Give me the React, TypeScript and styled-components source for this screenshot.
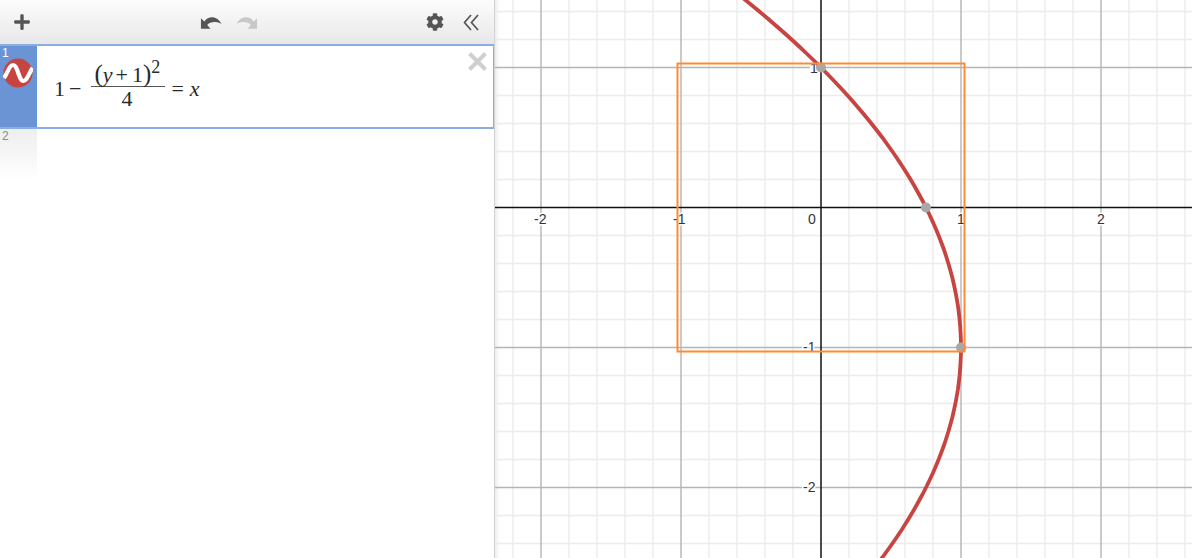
import { createGlobalStyle } from "styled-components";
import styled from "styled-components";
import { FaCog, FaPlus } from "react-icons/fa";

const GlobalStyle = createGlobalStyle`
  html, body {
    margin: 0;
    padding: 0;
    background: #fff;
    overflow: hidden;
  }
  body {
    font-family: "Liberation Sans", Arial, sans-serif;
  }
`;

const Page = styled.div`
  display: flex;
  width: 1192px;
  height: 558px;
  overflow: hidden;
`;

const Sidebar = styled.aside`
  flex: 0 0 495px;
  display: flex;
  flex-direction: column;
  background: #fff;
  border-right: 1px solid #d2d2d2;
  box-sizing: border-box;
`;

const Toolbar = styled.header`
  height: 44px;
  flex: none;
  display: grid;
  grid-template-columns: 187px auto 1fr;
  align-items: center;
  padding: 0 15px 0 13px;
  background: linear-gradient(#fcfcfc, #e8e8e8);
  color: #555;
`;

const ToolGroup = styled.div<{ $end?: boolean }>`
  display: flex;
  align-items: center;
  gap: ${(p) => (p.$end ? "19px" : "14px")};
  justify-content: ${(p) => (p.$end ? "flex-end" : "flex-start")};
`;

const ExpressionRow = styled.div`
  height: 85px;
  flex: none;
  display: flex;
  box-sizing: border-box;
  border: solid #8aaee2;
  border-width: 2px 1.5px 2px 0;
  position: relative;
`;

const Tab = styled.div`
  width: 37px;
  flex: none;
  display: flex;
  flex-direction: column;
  align-items: center;
  background: #6a94d3;
  color: #fff;
  font-size: 12px;
  line-height: 12px;
`;

const RowIndex = styled.span`
  align-self: flex-start;
  padding: 1px 0 0 2px;
`;

const CurveIcon = styled.svg`
  display: block;
  margin-top: -1px;
  margin-right: 1px;
`;

const MathBody = styled.div`
  flex: 1;
  display: flex;
  align-items: center;
  padding: 4px 0 0 17px;
  font-family: "Liberation Serif", "Times New Roman", serif;
  font-size: 22px;
  color: #2a2a2a;
`;

const Operator = styled.span<{ $left: number; $right: number }>`
  margin: 0 ${(p) => p.$right}px 0 ${(p) => p.$left}px;
`;

const Fraction = styled.span`
  display: inline-flex;
  flex-direction: column;
  align-items: center;
  width: 71px;
  margin-top: -5px;
`;

const Numerator = styled.span`
  height: 24px;
  line-height: 24px;
  white-space: nowrap;
  border-bottom: 1px solid #555;
  width: 100%;
  padding-left: 3px;
  box-sizing: content-box;
  margin-right: -3px;
`;

const Paren = styled.span`
  font-size: 25px;
  font-weight: 400;
`;

const Sup = styled.sup`
  font-size: 18px;
  line-height: 0;
  vertical-align: 9px;
`;

const Denominator = styled.span`
  height: 24px;
  line-height: 24px;
`;

const Italic = styled.i`
  font-style: italic;
`;

const CloseButton = styled.svg`
  position: absolute;
  top: 5px;
  right: 5px;
`;

const EmptyRow = styled.div`
  height: 52px;
  flex: none;
  display: flex;
`;

const EmptyTab = styled.div`
  width: 37px;
  background: linear-gradient(#eeeeee, #ffffff);
  color: #8a8a8a;
  font-size: 12px;
  line-height: 12px;
  padding: 1px 0 0 2px;
  box-sizing: border-box;
`;

const GraphPane = styled.main`
  flex: 1;
  position: relative;
  box-shadow: inset 5px 0 5px -4px rgba(0, 0, 0, 0.12);
`;

const GraphSvg = styled.svg`
  display: block;
`;

const AxisLabel = styled.text`
  font-family: "Liberation Sans", Arial, sans-serif;
  font-size: 14px;
  fill: #333;
  paint-order: stroke;
  stroke: #fff;
  stroke-width: 3px;
`;

// pane starts at x=495 in page coords
const OX = 821 - 495;
const OY = 207.5;
const UNIT = 140;
const W = 697;
const H = 558;

const px = (x: number) => OX + x * UNIT;
const py = (y: number) => OY - y * UNIT;

const range = (from: number, to: number) => {
  const out: number[] = [];
  for (let i = from; i <= to; i++) out.push(i);
  return out;
};

const minorX = range(-12, 14).filter((i) => i % 5 !== 0);
const minorY = range(-12, 12).filter((i) => i % 5 !== 0);

const parabola = range(-60, 60)
  .map((i) => {
    const y = -1 + i * 0.05;
    const x = 1 - ((y + 1) * (y + 1)) / 4;
    return `${i === -60 ? "M" : "L"}${px(x).toFixed(1)} ${py(y).toFixed(1)}`;
  })
  .join(" ");

const Graph = () => (
  <GraphSvg width={W} height={H} viewBox={`0 0 ${W} ${H}`}>
    <g stroke="#ececec" strokeWidth="1.5">
      {minorX.map((i) => (
        <line key={i} x1={px(i * 0.2)} x2={px(i * 0.2)} y1={0} y2={H} />
      ))}
      {minorY.map((i) => (
        <line key={i} x1={0} x2={W} y1={py(i * 0.2)} y2={py(i * 0.2)} />
      ))}
    </g>
    <g stroke="#b4b4b4" strokeWidth="1.4">
      {[-2, -1, 1, 2].map((i) => (
        <line key={i} x1={px(i)} x2={px(i)} y1={0} y2={H} />
      ))}
      {[-2, -1, 1].map((i) => (
        <line key={i} x1={0} x2={W} y1={py(i)} y2={py(i)} />
      ))}
    </g>
    <line x1={0} x2={W} y1={OY} y2={OY} stroke="#111" strokeWidth="1.5" />
    <line x1={OX} x2={OX} y1={0} y2={H} stroke="#111" strokeWidth="1.5" />

    <AxisLabel x={px(-2) - 7} y={224}>-2</AxisLabel>
    <AxisLabel x={px(-1) - 8} y={224}>-1</AxisLabel>
    <AxisLabel x={px(0) - 13} y={224}>0</AxisLabel>
    <AxisLabel x={px(1) - 4} y={224}>1</AxisLabel>
    <AxisLabel x={px(2) - 4} y={224}>2</AxisLabel>
    <AxisLabel x={OX - 11} y={py(1) + 5}>1</AxisLabel>
    <AxisLabel x={OX - 18} y={py(-1) + 4}>-1</AxisLabel>
    <AxisLabel x={OX - 18} y={py(-2) + 4}>-2</AxisLabel>

    <path d={parabola} fill="none" stroke="#c74440" strokeWidth="3.8" />
    <g fill="#a8a8a8">
      <circle cx={px(0)} cy={py(1)} r="5" />
      <circle cx={px(0.75)} cy={py(0)} r="5" />
      <circle cx={px(1)} cy={py(-1)} r="5" />
    </g>
    <rect x={182.5} y={63.5} width={287} height={288} fill="none" stroke="#ff8a33" strokeWidth="2" />
  </GraphSvg>
);

const UndoIcon = ({ color, flip }: { color: string; flip?: boolean }) => (
  <svg width="22" height="15" viewBox="0 0 23 15" style={flip ? { transform: "scaleX(-1)" } : undefined}>
    <path d="M1 3 L1 14 L11 14 L7.5 10 C11 6.5 17 6 22.5 9 C19 2 10 -1 4.5 6.5 Z" fill={color} />
  </svg>
);

const ChevronsIcon = () => (
  <svg width="16" height="17" viewBox="0 0 16 17">
    <path d="M8 1 L1.5 8.5 L8 16 M15 1 L8.5 8.5 L15 16" fill="none" stroke="#555" strokeWidth="1.7" />
  </svg>
);

export default function App() {
  return (
    <Page>
      <GlobalStyle />
      <Sidebar>
        <Toolbar>
          <ToolGroup>
            <FaPlus size={18} />
          </ToolGroup>
          <ToolGroup>
            <UndoIcon color="#555" />
            <UndoIcon color="#c8c8c8" flip />
          </ToolGroup>
          <ToolGroup $end>
            <FaCog size={18} />
            <ChevronsIcon />
          </ToolGroup>
        </Toolbar>
        <ExpressionRow>
          <Tab>
            <RowIndex>1</RowIndex>
            <CurveIcon width="30" height="30" viewBox="0 0 30 30">
              <circle cx="15" cy="15" r="14.5" fill="#c74440" />
              <path
                d="M1 20 C4.5 15 6.5 7 10 7 C15 7 15.5 23 20.5 23 C24 23 26 15 29.5 10"
                fill="none"
                stroke="#fff"
                strokeWidth="4.2"
              />
            </CurveIcon>
          </Tab>
          <MathBody>
            1
            <Operator $left={4} $right={10}>−</Operator>
            <Fraction>
              <Numerator>
                <Paren>(</Paren>
                <Italic>y</Italic>
                <Operator $left={3} $right={4}>+</Operator>
                1
                <Paren>)</Paren>
                <Sup>2</Sup>
              </Numerator>
              <Denominator>4</Denominator>
            </Fraction>
            <Operator $left={9} $right={6}>=</Operator>
            <Italic>x</Italic>
          </MathBody>
          <CloseButton width="21" height="21" viewBox="0 0 21 21">
            <path d="M2.5 2.5 L18.5 18.5 M18.5 2.5 L2.5 18.5" stroke="#cfcfcf" strokeWidth="4" />
          </CloseButton>
        </ExpressionRow>
        <EmptyRow>
          <EmptyTab>2</EmptyTab>
        </EmptyRow>
      </Sidebar>
      <GraphPane>
        <Graph />
      </GraphPane>
    </Page>
  );
}
